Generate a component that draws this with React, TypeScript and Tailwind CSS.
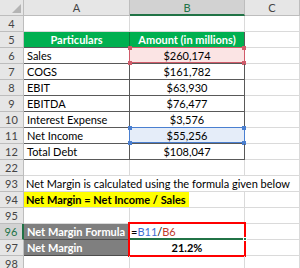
import React from "react";

const font = { fontFamily: "Lato, 'Open Sans', sans-serif" };

function RowNum({ n, active }: { n: number; active?: boolean }) {
  return (
    <div
      className={`h-4 w-6 shrink-0 flex items-center justify-center border-b border-[#bdbdbd] text-[11px] leading-none ${
        active ? "bg-[#d2d2d2] text-[#217346] border-r-2 border-r-[#217346]" : "bg-[#e6e6e6] text-[#444] border-r"
      }`}
    >
      {n}
    </div>
  );
}

function Handle({ className, color }: { className: string; color: string }) {
  return <span className={`absolute w-[4px] h-[4px] ${color} ${className}`} />;
}

const rows: [number, string, string][] = [
  [6, "Sales", "$260,174"],
  [7, "COGS", "$161,782"],
  [8, "EBIT", "$63,930"],
  [9, "EBITDA", "$76,477"],
  [10, "Interest Expense", "$3,576"],
  [11, "Net Income", "$55,256"],
  [12, "Total Debt", "$108,047"],
];

function Empty({ n, children }: { n: number; children?: React.ReactNode }) {
  return (
    <div className="flex h-4">
      <RowNum n={n} />
      <div className="relative flex-1 flex">
        <div className="w-[106px] border-r border-b border-[#dadada]" />
        <div className="w-[115px] border-r border-b border-[#dadada]" />
        <div className="w-[55px] border-r border-b border-[#dadada]" />
        <div className="flex-1 border-b border-[#dadada]" />
        {children}
      </div>
    </div>
  );
}

export default function App() {
  return (
    <div className="w-[300px] h-[268px] overflow-hidden bg-white text-[11px] leading-none text-black" style={font}>
      {/* column headers */}
      <div className="flex h-4">
        <div className="relative w-6 border-r border-b border-[#bdbdbd] bg-[#e6e6e6]">
          <span className="absolute right-[2px] bottom-[2px] w-0 h-0 border-l-[9px] border-l-transparent border-b-[9px] border-b-[#b4b4b4]" />
        </div>
        <div className="w-[106px] flex items-center justify-center border-r border-b border-[#bdbdbd] bg-[#e6e6e6] text-[#444]">A</div>
        <div className="w-[115px] flex items-center justify-center border-r border-b-2 border-r-[#bdbdbd] border-b-[#217346] bg-[#d2d2d2] text-[#217346]">B</div>
        <div className="w-[55px] flex items-center justify-center border-r border-b border-[#bdbdbd] bg-[#e6e6e6] text-[#444]">C</div>
        <div className="flex-1 border-b border-[#bdbdbd] bg-[#e6e6e6]" />
      </div>

      <Empty n={4} />

      {/* table header */}
      <div className="flex h-4">
        <RowNum n={5} />
        <div className="w-[106px] flex items-center justify-center bg-[#00b050] text-white font-bold border-r border-b border-r-[#0a7a3a] border-b-[#595959]">Particulars</div>
        <div className="w-[115px] flex items-center justify-center bg-[#00b050] text-white font-bold border-r border-b border-[#595959] whitespace-nowrap">Amount (in millions)</div>
        <div className="w-[55px] border-r border-b border-[#dadada]" />
        <div className="flex-1 border-b border-[#dadada]" />
      </div>

      {rows.map(([n, label, val]) => (
        <div key={n} className="flex h-4">
          <RowNum n={n} />
          <div className="w-[106px] flex items-center pl-[3px] border-r border-b border-[#595959] whitespace-nowrap">{label}</div>
          <div
            className={`relative w-[115px] flex items-center justify-center border-r border-b border-[#595959] ${
              n === 6 ? "bg-[#fbe4e4]" : n === 11 ? "bg-[#e5edf9]" : ""
            }`}
          >
            {n === 6 && (
              <>
                <span className="absolute -left-px -top-px -right-px bottom-0 border border-[#d05b6a]" />
                <Handle color="bg-[#d05b6a]" className="-left-[2px] -top-[2px]" />
                <Handle color="bg-[#d05b6a]" className="-right-[2px] -top-[2px]" />
                <Handle color="bg-[#d05b6a]" className="-left-[2px] -bottom-[2px]" />
                <Handle color="bg-[#d05b6a]" className="-right-[2px] -bottom-[2px]" />
              </>
            )}
            {n === 11 && (
              <>
                <span className="absolute -left-px -top-px -right-px bottom-0 border border-[#4a7fd0]" />
                <Handle color="bg-[#4a7fd0]" className="-left-[2px] -top-[2px]" />
                <Handle color="bg-[#4a7fd0]" className="-right-[2px] -top-[2px]" />
                <Handle color="bg-[#4a7fd0]" className="-left-[2px] -bottom-[2px]" />
                <Handle color="bg-[#4a7fd0]" className="-right-[2px] -bottom-[2px]" />
              </>
            )}
            <span className="relative">{val}</span>
          </div>
          <div className="w-[55px] border-r border-b border-[#dadada]" />
          <div className="flex-1 border-b border-[#dadada]" />
        </div>
      ))}

      <Empty n={22} />
      <Empty n={93}>
        <span className="absolute left-[2px] top-0 h-[15px] flex items-center whitespace-nowrap bg-white pr-1">
          Net Margin is calculated using the formula given below
        </span>
      </Empty>
      <Empty n={94}>
        <span className="absolute left-0 top-0 h-[15px] flex items-center whitespace-nowrap bg-[#ffff00] pl-[2px] pr-[3px] font-bold">
          Net Margin = Net Income / Sales
        </span>
      </Empty>
      <Empty n={95} />

      {/* formula block */}
      <div className="flex h-4">
        <RowNum n={96} active />
        <div className="w-[106px] flex items-center pl-[3px] bg-[#7f7f7f] text-white font-bold border-r border-b border-[#4d4d4d] whitespace-nowrap">Net Margin Formula</div>
        <div className="relative w-[115px] flex items-center pl-[1px] border-r border-b border-[#dadada]">
          <span className="absolute -left-[2px] -top-[2px] -right-[2px] h-[35px] border-2 border-[#ff0000]" />
          <span className="absolute left-0 right-0 bottom-[-1px] h-[2px] bg-[#217346]" />
          <span className="absolute -right-[3px] bottom-[-2px] w-[4px] h-[4px] bg-[#217346] border border-white" />
          <span className="relative whitespace-nowrap">
            =<span className="text-[#3f6fd4]">B11</span>/<span className="text-[#c0392b]">B6</span>
          </span>
        </div>
        <div className="w-[55px] border-r border-b border-[#dadada]" />
        <div className="flex-1 border-b border-[#dadada]" />
      </div>
      <div className="flex h-4">
        <RowNum n={97} />
        <div className="w-[106px] flex items-center pl-[3px] bg-[#7f7f7f] text-white font-bold border-r border-b border-[#4d4d4d]">Net Margin</div>
        <div className="w-[115px] flex items-center justify-center font-bold border-r border-b border-[#dadada]">21.2%</div>
        <div className="w-[55px] border-r border-b border-[#dadada]" />
        <div className="flex-1 border-b border-[#dadada]" />
      </div>
      <Empty n={98} />
    </div>
  );
}
